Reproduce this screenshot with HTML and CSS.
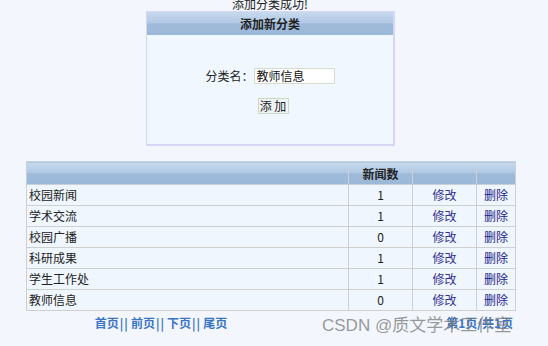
FILE: index.html
```html
<!DOCTYPE html>
<html lang="zh">
<head>
<meta charset="utf-8">
<title>添加分类</title>
<link rel="stylesheet" href="styles.css">
</head>
<body>
<div class="page">
  <div class="msg">添加分类成功!</div>
  <div class="panel">
    <div class="panel-head">添加新分类</div>
    <div class="panel-body">
      <div class="field">
        <span class="label">分类名：</span>
        <span class="input">教师信息</span>
      </div>
      <div class="actions"><span class="btn">添&nbsp;加</span></div>
    </div>
  </div>
  <table class="list">
    <thead>
      <tr><th class="c-name"></th><th class="c-num">新闻数</th><th class="c-edit"></th><th class="c-del"></th></tr>
    </thead>
    <tbody>
      <tr><td>校园新闻</td><td class="num">1</td><td class="act"><a class="edit">修改</a></td><td class="act"><a class="del">删除</a></td></tr>
      <tr><td>学术交流</td><td class="num">1</td><td class="act"><a class="edit">修改</a></td><td class="act"><a class="del">删除</a></td></tr>
      <tr><td>校园广播</td><td class="num">0</td><td class="act"><a class="edit">修改</a></td><td class="act"><a class="del">删除</a></td></tr>
      <tr><td>科研成果</td><td class="num">1</td><td class="act"><a class="edit">修改</a></td><td class="act"><a class="del">删除</a></td></tr>
      <tr><td>学生工作处</td><td class="num">1</td><td class="act"><a class="edit">修改</a></td><td class="act"><a class="del">删除</a></td></tr>
      <tr><td>教师信息</td><td class="num">0</td><td class="act"><a class="edit">修改</a></td><td class="act"><a class="del">删除</a></td></tr>
    </tbody>
  </table>
  <div class="pager">
    <div class="pager-left"><a>首页</a><span class="sep">||</span><a>前页</a><span class="sep">||</span><a>下页</a><span class="sep">||</span><a>尾页</a></div>
    <div class="pager-right">第1页/共1页</div>
  </div>
  <div class="watermark">CSDN @质文学术工作室</div>
</div>
</body>
</html>
```
FILE: styles.css
```css
html, body {
  margin: 0;
  padding: 0;
  background: #f3f7fd;
}
body {
  font-family: "Noto Sans CJK SC", "Liberation Sans", sans-serif;
  font-size: 12px;
  color: #222;
  overflow: hidden;
}
.page {
  position: relative;
  width: 540px;
  height: 346px;
}
.msg {
  margin-top: -4px;
  height: 15px;
  line-height: 15px;
  text-align: center;
  color: #222;
}
.panel {
  width: 246px;
  margin: 0 auto 0 146px;
  border: 1px solid #d6d6f6;
  border-right-width: 2px;
  border-bottom-width: 2px;
  background: #f0f7ff;
}
.panel-head {
  height: 23px;
  line-height: 23px;
  text-align: center;
  font-weight: bold;
  color: #222;
  background: linear-gradient(#c6d9ee 0%, #b1c9e4 48%, #9fbad9 52%, #9cb8d8 100%);
}
.panel-body {
  height: 109px;
  display: flex;
  flex-direction: column;
  align-items: center;
  padding-top: 32px;
  box-sizing: border-box;
}
.field {
  display: flex;
  align-items: center;
  gap: 0;
}
.label { color: #222; }
.input {
  display: block;
  width: 75px;
  height: 14px;
  line-height: 14px;
  padding: 0 2px;
  border: 1px solid #d4dccc;
  background: #fff;
  color: #111;
}
.actions {
  margin-top: 14px;
  margin-left: 6px;
}
.btn {
  display: block;
  width: 29px;
  height: 14px;
  line-height: 14px;
  text-align: center;
  border: 1px solid #cfd8c4;
  background: #eef3f6;
  color: #222;
  white-space: nowrap;
}
.list {
  margin: 15px 0 0 26px;
  width: 489px;
  border-collapse: collapse;
  table-layout: fixed;
  border: 1px solid #cfcfcf;
}
.list th {
  height: 22px;
  padding: 0;
  font-weight: bold;
  background: linear-gradient(#c6d9ee 0%, #b1c9e4 45%, #9fbad9 52%, #9cb8d8 100%);
  border: 1px solid #c8d0dc;
  color: #222;
}
.c-name { width: 321px; }
.c-num { width: 63px; }
.c-edit { width: 63px; }
.c-del { width: 38px; }
.list td {
  height: 20px;
  padding: 0 2px;
  border: 1px solid #cfcfcf;
  background: #f0f6fd;
  line-height: 20px;
}
.list td.num { text-align: center; }
.list td.act { text-align: center; }
.edit { color: #33338f; }
.del { color: #22228a; }
.pager {
  display: flex;
  align-items: center;
  height: 22px;
  margin-left: 26px;
  width: 489px;
  font-weight: bold;
  color: #3a74c4;
}
.pager-left {
  width: 270px;
  text-align: center;
}
.pager-left a { color: #3a74c4; }
.sep {
  letter-spacing: 1px;
  margin: 0 2px 0 1px;
}
.pager-right {
  flex: 1;
  text-align: right;
  padding-right: 2px;
}
.watermark {
  position: absolute;
  left: 322px;
  top: 315px;
  font-family: "Liberation Sans", "Noto Sans CJK SC", sans-serif;
  font-size: 17px;
  color: rgba(120, 120, 120, 0.75);
  white-space: nowrap;
}
```
